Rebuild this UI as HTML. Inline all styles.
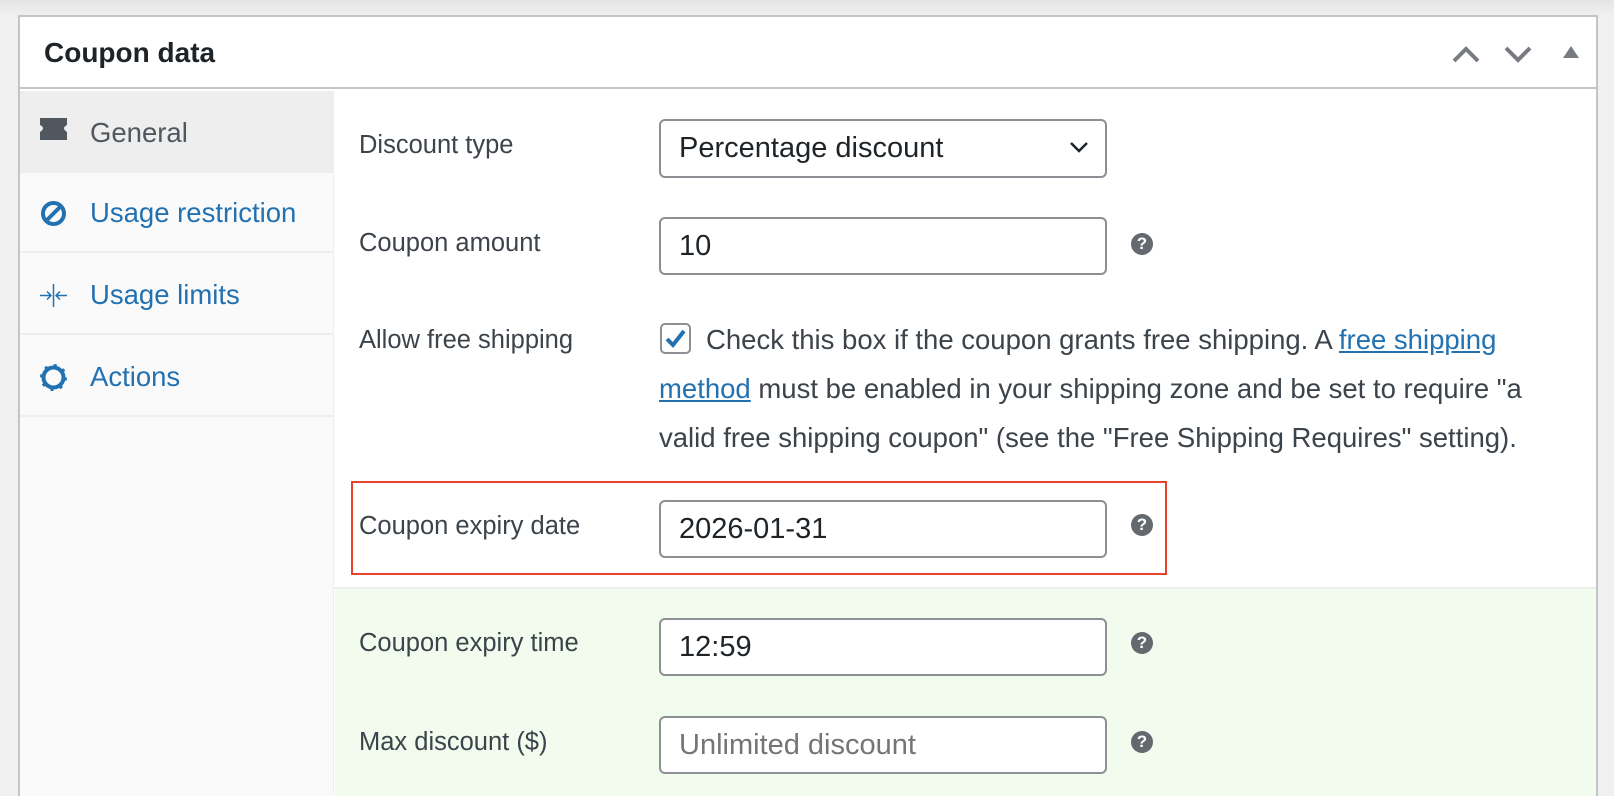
<!DOCTYPE html>
<html><head><meta charset="utf-8"><style>
*{box-sizing:border-box;margin:0;padding:0}
html,body{width:1614px;height:796px;overflow:hidden}
body{background:#f0f0f1;font-family:"Liberation Sans",sans-serif;position:relative}
.a{position:absolute}
.panel{left:18px;top:15px;width:1580px;height:781px;background:#fff;border:2px solid #c3c4c7;border-bottom:none}
.hdr{left:20px;top:17px;width:1576px;height:72px;background:#fff;border-bottom:2px solid #c3c4c7}
.title{left:44px;top:37px;font-size:28px;font-weight:bold;color:#1d2327}
.side{left:20px;top:91px;width:314px;height:705px;background:#fafafa;border-right:1px solid #eee}
.item{left:20px;width:314px;height:80px;border-bottom:2px solid #eee}
.it{left:90px;font-size:27.5px;color:#2271b1}
.lbl{left:359px;font-size:25.5px;color:#3c434a}
.inp{left:659px;width:448px;height:58px;border:2px solid #8c8f94;border-radius:6px;background:#fff;font-size:29px;color:#1d2327;padding-left:18px;line-height:54px}
.help{width:22px;height:22px;border-radius:50%;background:#646970;color:#fff;font-weight:bold;font-size:17px;text-align:center;line-height:22px}
.txt{left:706px;font-size:27.5px;color:#3c434a;white-space:nowrap}
a{color:#2271b1;text-decoration:underline}
</style></head><body>
<div class="a" style="left:0;top:0;width:1614px;height:15px;background:linear-gradient(#e4e4e5,#f0f0f1)"></div>
<div class="a panel"></div>
<div class="a hdr"></div>
<div class="a title">Coupon data</div>
<svg class="a" style="left:1450px;top:40px" width="140" height="30">
<polyline points="4,21 16,9 28,21" fill="none" stroke="#787c82" stroke-width="4"/>
<polyline points="56,8 68,20 80,8" fill="none" stroke="#787c82" stroke-width="4"/>
<polygon points="113,18 121,6 129,18" fill="#787c82"/>
</svg>
<div class="a" style="left:334px;top:91px;width:1262px;height:498px;background:#fff"></div>
<div class="a" style="left:334px;top:587px;width:1262px;height:2px;background:#eee"></div>
<div class="a" style="left:335px;top:589px;width:1261px;height:207px;background:#f1fcef"></div>
<div class="a side"></div>
<div class="a" style="left:20px;top:91px;width:314px;height:82px;background:#eeeeee"></div>
<div class="a item" style="top:173px"></div>
<div class="a item" style="top:255px"></div>
<div class="a item" style="top:337px"></div>
<svg class="a" style="left:40px;top:118px" width="27" height="24"><path d="M0,0H27V7Q21,10 27,14V22H0V14Q6,10 0,7Z" fill="#50575e"/></svg>
<div class="a it" style="top:117px;color:#50575e">General</div>
<svg class="a" style="left:40px;top:200px" width="27" height="27"><circle cx="13.5" cy="13.5" r="10.5" fill="none" stroke="#2271b1" stroke-width="4"/><line x1="7" y1="20" x2="20" y2="7" stroke="#2271b1" stroke-width="4"/></svg>
<div class="a it" style="top:197px">Usage restriction</div>
<svg class="a" style="left:40px;top:282px" width="27" height="27"><line x1="13.5" y1="2" x2="13.5" y2="25" stroke="#2271b1" stroke-width="1.5"/><path d="M0,13.5H11M7,9.5L11,13.5L7,17.5M27,13.5H16M20,9.5L16,13.5L20,17.5" fill="none" stroke="#2271b1" stroke-width="1.5"/></svg>
<div class="a it" style="top:279px">Usage limits</div>
<svg class="a" style="left:40px;top:364px" width="27" height="27"><circle cx="13.5" cy="13.5" r="10" fill="none" stroke="#2271b1" stroke-width="4"/><circle cx="13.5" cy="13.5" r="12" fill="none" stroke="#2271b1" stroke-width="3" stroke-dasharray="3 6.4"/></svg>
<div class="a it" style="top:361px">Actions</div>

<div class="a lbl" style="top:131px">Discount type</div>
<div class="a inp" style="top:119px;height:59px">Percentage discount</div>
<svg class="a" style="left:1069px;top:140px" width="20" height="14"><polyline points="2,3 10,11 18,3" fill="none" stroke="#1d2327" stroke-width="2.5"/></svg>

<div class="a lbl" style="top:229px">Coupon amount</div>
<div class="a inp" style="top:217px">10</div>
<div class="a help" style="left:1131px;top:233px">?</div>

<div class="a lbl" style="top:326px">Allow free shipping</div>
<div class="a" style="left:660px;top:323px;width:31px;height:31px;border:2px solid #8c8f94;border-radius:5px;background:#fff"></div>
<svg class="a" style="left:662px;top:325px" width="27" height="27"><polyline points="5,14 11,20 22,6" fill="none" stroke="#2271b1" stroke-width="4"/></svg>
<div class="a txt" style="top:324px">Check this box if the coupon grants free shipping. A <a>free shipping</a></div>
<div class="a txt" style="top:373px;left:659px"><a>method</a> must be enabled in your shipping zone and be set to require "a</div>
<div class="a txt" style="top:422px;left:659px">valid free shipping coupon" (see the "Free Shipping Requires" setting).</div>

<div class="a" style="left:351px;top:481px;width:816px;height:94px;border:2px solid #e8412c"></div>
<div class="a lbl" style="top:512px">Coupon expiry date</div>
<div class="a inp" style="top:500px">2026-01-31</div>
<div class="a help" style="left:1131px;top:514px">?</div>

<div class="a lbl" style="top:629px">Coupon expiry time</div>
<div class="a inp" style="top:618px">12:59</div>
<div class="a help" style="left:1131px;top:632px">?</div>

<div class="a lbl" style="top:728px">Max discount ($)</div>
<div class="a inp" style="top:716px;color:#757575">Unlimited discount</div>
<div class="a help" style="left:1131px;top:731px">?</div>
</body></html>
